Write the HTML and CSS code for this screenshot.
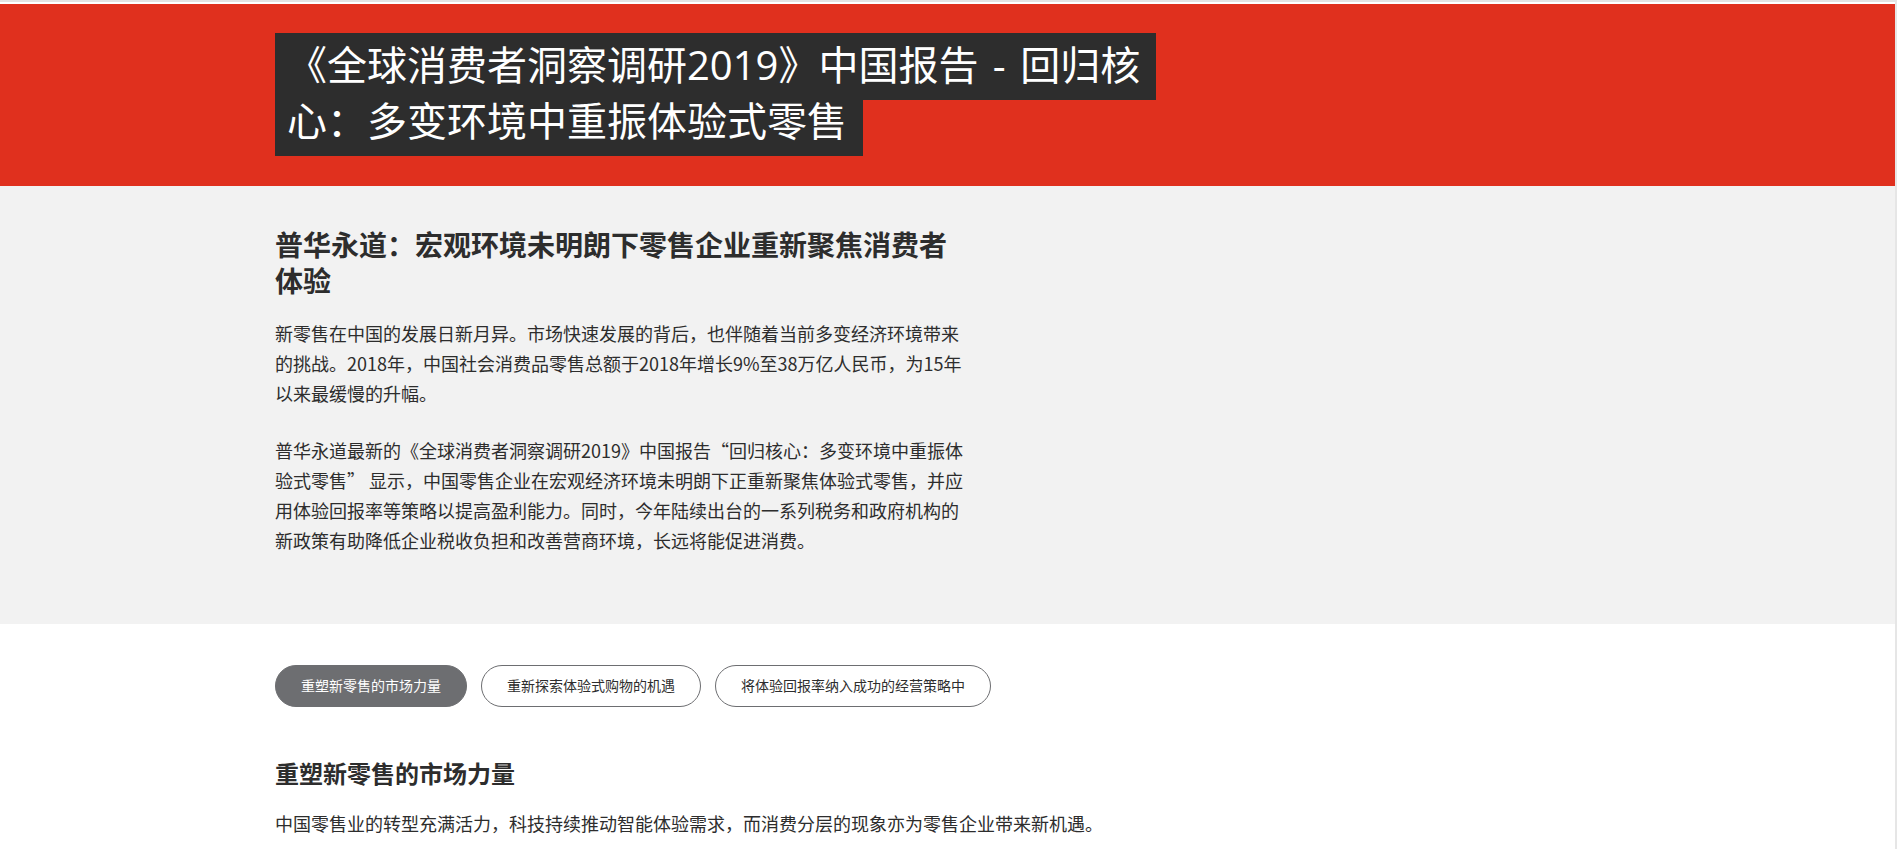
FILE: index.html
```html
<!DOCTYPE html>
<html lang="zh-CN">
<head>
    <meta charset="UTF-8">
    <meta name="viewport" content="width=device-width, initial-scale=1.0">
    <title>全球消费者洞察调研2019 - 中国报告</title>
    <link rel="stylesheet" href="styles.css">
</head>
<body>
    <div class="page">
        <header class="hero">
            <div class="wrap">
                <h1 class="hero-title"><span>《全球消费者洞察调研2019》中国报告 - 回归核心：多变环境中重振体验式零售</span></h1>
            </div>
        </header>

        <section class="intro">
            <div class="wrap">
                <div class="intro-text">
                    <h2>普华永道：宏观环境未明朗下零售企业重新聚焦消费者体验</h2>
                    <p>新零售在中国的发展日新月异。市场快速发展的背后，也伴随着当前多变经济环境带来的挑战。2018年，中国社会消费品零售总额于2018年增长9%至38万亿人民币，为15年以来最缓慢的升幅。</p>
                    <p>普华永道最新的《全球消费者洞察调研2019》中国报告“回归核心：多变环境中重振体验式零售” 显示，中国零售企业在宏观经济环境未明朗下正重新聚焦体验式零售，并应用体验回报率等策略以提高盈利能力。同时，今年陆续出台的一系列税务和政府机构的新政策有助降低企业税收负担和改善营商环境，长远将能促进消费。</p>
                </div>
            </div>
        </section>

        <section class="topics">
            <div class="wrap">
                <nav class="tabs">
                    <a class="tab active" href="#market">重塑新零售的市场力量</a>
                    <a class="tab" href="#shopping">重新探索体验式购物的机遇</a>
                    <a class="tab" href="#roe">将体验回报率纳入成功的经营策略中</a>
                </nav>
                <h3 id="market">重塑新零售的市场力量</h3>
                <p>中国零售业的转型充满活力，科技持续推动智能体验需求，而消费分层的现象亦为零售企业带来新机遇。</p>
            </div>
        </section>
    </div>
</body>
</html>
```

FILE: styles.css
```css
body {
    margin: 0;
    font-family: "Open Sans", "Noto Sans CJK SC", sans-serif;
    color: #2d2d2d;
    background-color: #fff;
}
.page {
    border-top: 2px solid #e3e3e3;
    border-right: 2px solid #e6e6e6;
    padding-top: 2px;
}
.wrap {
    width: 1345px;
    margin: 0 auto;
}

/* red banner with the report title */
.hero {
    background-color: #e0301e;
    padding: 33px 0 37px;
}
.hero-title {
    max-width: 900px;
    margin: 0;
    font-size: 40px;
    font-weight: normal;
    line-height: 56px;
    word-spacing: 4px;
}
.hero-title span {
    background-color: #2d2d2d;
    color: #fff;
    padding: 4px 16px 8px 12px;
    -webkit-box-decoration-break: clone;
    box-decoration-break: clone;
}

/* grey intro block */
.intro {
    background-color: #f2f2f2;
    padding: 41px 0 69px;
}
.intro-text {
    width: 696px;
}
.intro h2 {
    margin: 0 0 19px;
    font-size: 28px;
    line-height: 36px;
    font-weight: bold;
}
/* body copy set in the CJK face so the curly quotes stay full width */
.intro p {
    margin: 0 0 27px;
    font-family: "Noto Sans CJK SC", sans-serif;
    font-size: 18px;
    line-height: 30px;
}
.intro p:last-child {
    margin-bottom: 0;
}

/* topic tabs */
.topics {
    padding: 41px 0 40px;
}
.tabs {
    display: flex;
    gap: 14px;
}
.tab {
    display: block;
    padding: 10px 25px;
    border: 1px solid #6d6e71;
    border-radius: 21px;
    font-size: 14px;
    line-height: 20px;
    color: #2d2d2d;
    text-decoration: none;
}
.tab.active {
    background-color: #6d6e71;
    color: #fff;
}
.topics h3 {
    margin: 51px 0 19px;
    font-size: 24px;
    line-height: 32px;
    font-weight: bold;
}
.topics p {
    margin: 0;
    font-size: 18px;
    line-height: 30px;
}
```
